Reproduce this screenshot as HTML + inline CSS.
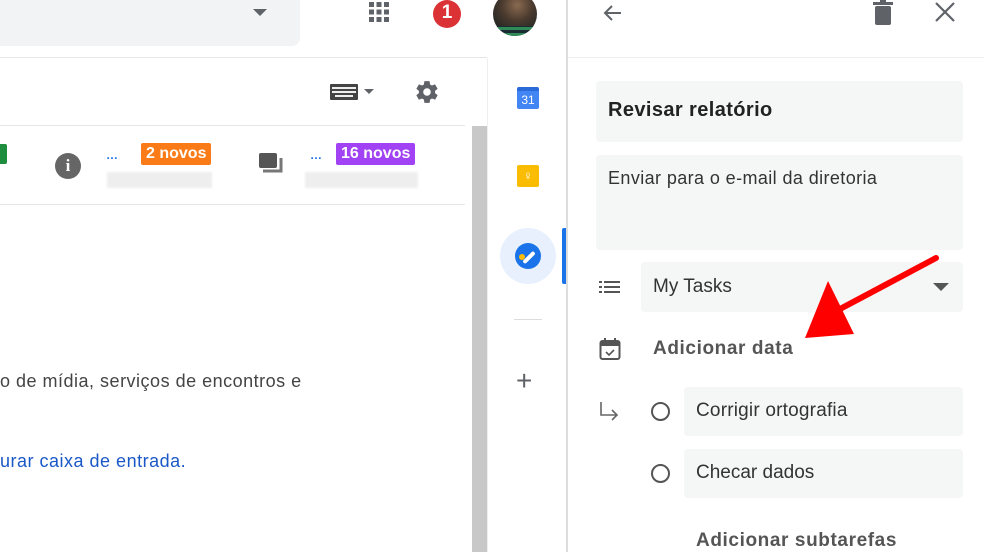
<!DOCTYPE html>
<html><head><meta charset="utf-8"><style>
*{margin:0;padding:0;box-sizing:border-box}
body{width:984px;height:552px;overflow:hidden;background:#fff;font-family:"Liberation Sans",Arial,sans-serif;position:relative}
.a{position:absolute}
.box{position:absolute;background:#f5f6f6;border-radius:4px}
</style></head><body>
<div class="a" style="left:0;top:0;width:300px;height:46px;background:#f1f3f4;border-radius:0 0 8px 0"></div>
<div class="a" style="left:253px;top:9px;width:0;height:0;border-left:7px solid transparent;border-right:7px solid transparent;border-top:7px solid #5f6368"></div>
<svg class="a" style="left:368px;top:1px" width="22" height="22" viewBox="0 0 22 22" fill="#5f6368">
<rect x="1" y="1" width="5" height="5"/><rect x="8.5" y="1" width="5" height="5"/><rect x="16" y="1" width="5" height="5"/>
<rect x="1" y="8.5" width="5" height="5"/><rect x="8.5" y="8.5" width="5" height="5"/><rect x="16" y="8.5" width="5" height="5"/>
<rect x="1" y="16" width="5" height="5"/><rect x="8.5" y="16" width="5" height="5"/><rect x="16" y="16" width="5" height="5"/></svg>
<div class="a" style="left:433px;top:0;width:28px;height:28px;border-radius:50%;background:#db3236;color:#fff;font-weight:bold;font-size:19px;text-align:center;line-height:26px">1</div>
<div class="a" style="left:493px;top:-8px;width:44px;height:44px;border-radius:50%;background:radial-gradient(circle at 55% 30%,#8a6a50 0,#4a3a2e 40%,#2a2a26 70%);overflow:hidden"><div style="position:absolute;bottom:0;left:0;width:44px;height:10px;background:repeating-linear-gradient(0deg,#2e8b57 0 3px,#1c2a33 3px 6px)"></div></div>
<div class="a" style="left:0;top:57px;width:487px;height:1px;background:#e6e6e6"></div>
<svg class="a" style="left:330px;top:84px" width="28" height="16" viewBox="0 0 28 16"><rect width="28" height="16" rx="1" fill="#444"/><g fill="#eee"><rect x="2" y="3" width="24" height="2"/><rect x="2" y="7" width="24" height="2"/><rect x="5" y="11" width="18" height="2"/></g></svg>
<div class="a" style="left:364px;top:89px;border-left:5px solid transparent;border-right:5px solid transparent;border-top:5px solid #5f6368"></div>
<svg class="a" style="left:414px;top:79px" width="26" height="26" viewBox="0 0 24 24" fill="#5f6368"><path d="M19.4 13c.04-.32.06-.66.06-1s-.02-.68-.06-1l2.1-1.65c.19-.15.24-.42.12-.64l-2-3.460c-.12-.22-.39-.3-.61-.22l-2.49 1c-.52-.4-1.08-.73-1.690-.98l-.38-2.65A.49.49 0 0 0 14 2h-4c-.25 0-.46.18-.49.42l-.38 2.65c-.61.25-1.17.59-1.69.98l-2.49-1c-.23-.09-.49 0-.61.22l-2 3.46c-.13.22-.07.49.12.64L4.57 11c-.04.32-.07.65-.07 1s.03.68.07 1l-2.11 1.65c-.19.15-.24.42-.12.64l2 3.46c.12.22.39.3.61.22l2.49-1c.52.4 1.08.73 1.69.98l.38 2.65c.03.24.24.42.49.42h4c.25 0 .46-.18.49-.42l.38-2.65c.61-.25 1.17-.59 1.69-.98l2.49 1c.23.09.49 0 .61-.22l2-3.46c.12-.22.07-.49-.12-.64L19.4 13zM12 15.5A3.5 3.5 0 1 1 12 8.5a3.5 3.5 0 0 1 0 7z"/></svg>
<div class="a" style="left:0;top:125px;width:465px;height:1px;background:#e6e6e6"></div>
<div class="a" style="left:0;top:204px;width:465px;height:1px;background:#e6e6e6"></div>
<div class="a" style="left:0;top:144px;width:7px;height:20px;background:#1e8e3e;border-radius:0 2px 2px 0"></div>
<div class="a" style="left:55px;top:153px;width:26px;height:26px;border-radius:50%;background:#666;color:#fff;font-weight:bold;font-size:17px;text-align:center;line-height:26px;font-family:'Liberation Serif',serif">i</div>
<div class="a" style="left:106px;top:148px;color:#1a73e8;font-size:12px;font-weight:bold;letter-spacing:-1px">…</div>
<div class="a" style="left:141px;top:143px;background:#fa7b17;color:#fff;font-weight:bold;font-size:16px;padding:0 5px;height:22px;line-height:22px;border-radius:2px">2 novos</div>
<div class="a" style="left:107px;top:172px;width:105px;height:16px;background:#eee;filter:blur(1px)"></div>
<svg class="a" style="left:259px;top:153px" width="26" height="24" viewBox="0 0 26 24"><rect x="0" y="0" width="18" height="15" rx="2" fill="#555"/><path d="M4 18h18V5" stroke="#777" stroke-width="3" fill="none"/></svg>
<div class="a" style="left:310px;top:148px;color:#1a73e8;font-size:12px;font-weight:bold;letter-spacing:-1px">…</div>
<div class="a" style="left:336px;top:143px;background:#a142f4;color:#fff;font-weight:bold;font-size:16px;padding:0 5px;height:22px;line-height:22px;border-radius:2px">16 novos</div>
<div class="a" style="left:305px;top:172px;width:113px;height:16px;background:#eee;filter:blur(1px)"></div>
<div class="a" style="left:0;top:371px;font-size:18px;letter-spacing:0.5px;color:#444;white-space:nowrap">o de mídia, serviços de encontros e</div>
<div class="a" style="left:0;top:451px;font-size:18px;letter-spacing:0.5px;color:#1a58c8;white-space:nowrap">urar caixa de entrada.</div>
<div class="a" style="left:472px;top:126px;width:15px;height:426px;background:#c8c8c8"></div>
<div class="a" style="left:487px;top:58px;width:1px;height:494px;background:#eee"></div>
<div class="a" style="left:517px;top:87px;width:22px;height:22px;background:#4285f4;border-radius:2px;border-top:4px solid #2a6ad9;color:#fff;font-size:12px;text-align:center;line-height:18px">31</div>
<div class="a" style="left:517px;top:165px;width:22px;height:22px;background:#fbbc04;border-radius:2px;color:#fff;font-size:13px;text-align:center;line-height:22px">♀</div>
<div class="a" style="left:500px;top:228px;width:56px;height:56px;border-radius:50%;background:#e8f0fe"></div>
<div class="a" style="left:515px;top:243px;width:26px;height:26px;border-radius:50%;background:#1a73e8"></div>
<div class="a" style="left:527px;top:250px;width:4px;height:15px;background:#fff;transform:rotate(45deg);border-radius:2px"></div>
<div class="a" style="left:519px;top:254px;width:6px;height:6px;border-radius:50%;background:#fbbc04"></div>
<div class="a" style="left:562px;top:228px;width:4px;height:56px;background:#1a73e8;border-radius:2px 0 0 2px"></div>
<div class="a" style="left:514px;top:319px;width:28px;height:1px;background:#ddd"></div>
<div class="a" style="left:516px;top:367px;font-size:28px;color:#5f6368;line-height:28px">+</div>
<div class="a" style="left:566px;top:0;width:2px;height:552px;background:#ddd"></div>
<svg class="a" style="left:600px;top:1px" width="26" height="24" viewBox="0 0 24 24"><path d="M20 12H5M11 5l-7 7 7 7" stroke="#5f6368" stroke-width="2" fill="none"/></svg>
<svg class="a" style="left:872px;top:0" width="22" height="26" viewBox="0 0 22 26" fill="#5f6368"><rect x="1" y="2" width="20" height="3"/><rect x="8" y="0" width="6" height="3"/><rect x="3" y="6" width="16" height="19" rx="2"/></svg>
<svg class="a" style="left:934px;top:1px" width="22" height="22" viewBox="0 0 22 22"><path d="M2 2l18 18M20 2L2 20" stroke="#5f6368" stroke-width="2.2"/></svg>
<div class="a" style="left:568px;top:57px;width:416px;height:1px;background:#eee"></div>
<div class="box" style="left:596px;top:81px;width:367px;height:61px"></div>
<div class="a" style="left:608px;top:99px;font-size:20px;color:#222;font-weight:bold;letter-spacing:0.4px">Revisar relatório</div>
<div class="box" style="left:596px;top:155px;width:367px;height:95px"></div>
<div class="a" style="left:608px;top:168px;font-size:18px;letter-spacing:0.4px;color:#333;white-space:nowrap">Enviar para o e-mail da diretoria</div>
<svg class="a" style="left:599px;top:280px" width="22" height="14" viewBox="0 0 22 14" fill="#555"><rect x="0" y="1" width="3" height="2"/><rect x="5" y="1" width="16" height="2"/><rect x="0" y="6" width="3" height="2"/><rect x="5" y="6" width="16" height="2"/><rect x="0" y="11" width="3" height="2"/><rect x="5" y="11" width="16" height="2"/></svg>
<div class="box" style="left:641px;top:262px;width:322px;height:50px"></div>
<div class="a" style="left:653px;top:276px;font-size:19px;color:#333">My Tasks</div>
<div class="a" style="left:933px;top:283px;border-left:8px solid transparent;border-right:8px solid transparent;border-top:8px solid #555"></div>
<svg class="a" style="left:599px;top:337px" width="22" height="24" viewBox="0 0 22 24"><rect x="1.5" y="4" width="19" height="18" rx="2" fill="none" stroke="#555" stroke-width="2"/><rect x="1.5" y="4" width="19" height="5" fill="#555"/><rect x="5" y="1" width="2" height="4" fill="#555"/><rect x="15" y="1" width="2" height="4" fill="#555"/><path d="M7 15l3 3 5-5" stroke="#555" stroke-width="1.6" fill="none"/></svg>
<div class="a" style="left:653px;top:338px;font-size:19px;color:#555;font-weight:bold;letter-spacing:0.6px">Adicionar data</div>
<svg class="a" style="left:599px;top:401px" width="22" height="22" viewBox="0 0 22 22"><path d="M2 1v13h16M13 9l5 5-5 5" stroke="#666" stroke-width="1.6" fill="none"/></svg>
<div class="a" style="left:651px;top:402px;width:19px;height:19px;border:2px solid #555;border-radius:50%"></div>
<div class="box" style="left:684px;top:387px;width:279px;height:49px"></div>
<div class="a" style="left:696px;top:400px;font-size:19px;color:#333;letter-spacing:0.2px">Corrigir ortografia</div>
<div class="a" style="left:651px;top:464px;width:19px;height:19px;border:2px solid #555;border-radius:50%"></div>
<div class="box" style="left:684px;top:449px;width:279px;height:49px"></div>
<div class="a" style="left:696px;top:462px;font-size:19px;color:#333">Checar dados</div>
<div class="a" style="left:696px;top:530px;font-size:19px;color:#555;font-weight:bold;letter-spacing:0.6px">Adicionar subtarefas</div>
<svg class="a" style="left:800px;top:255px" width="140" height="90" viewBox="0 0 140 90"><path d="M136 3L40 54" stroke="#f00" stroke-width="6" stroke-linecap="round"/><path d="M5 83L28 26L54 79Z" fill="#f00"/></svg>
</body></html>
